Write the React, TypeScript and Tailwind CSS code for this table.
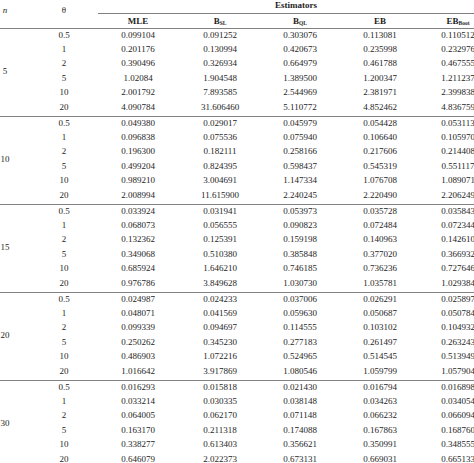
import React from "react";

type Block = { n: string; rows: [string, string, string, string, string, string][] };

const blocks: Block[] = [
  {
    n: "5",
    rows: [
      ["0.5", "0.099104", "0.091252", "0.303076", "0.113081", "0.110512"],
      ["1", "0.201176", "0.130994", "0.420673", "0.235998", "0.232976"],
      ["2", "0.390496", "0.326934", "0.664979", "0.461788", "0.467555"],
      ["5", "1.02084", "1.904548", "1.389500", "1.200347", "1.211237"],
      ["10", "2.001792", "7.893585", "2.544969", "2.381971", "2.399838"],
      ["20", "4.090784", "31.606460", "5.110772", "4.852462", "4.836759"],
    ],
  },
  {
    n: "10",
    rows: [
      ["0.5", "0.049380", "0.029017", "0.045979", "0.054428", "0.053113"],
      ["1", "0.096838", "0.075536", "0.075940", "0.106640", "0.105970"],
      ["2", "0.196300", "0.182111", "0.258166", "0.217606", "0.214408"],
      ["5", "0.499204", "0.824395", "0.598437", "0.545319", "0.551117"],
      ["10", "0.989210", "3.004691", "1.147334", "1.076708", "1.089071"],
      ["20", "2.008994", "11.615900", "2.240245", "2.220490", "2.206249"],
    ],
  },
  {
    n: "15",
    rows: [
      ["0.5", "0.033924", "0.031941", "0.053973", "0.035728", "0.035843"],
      ["1", "0.068073", "0.056555", "0.090823", "0.072484", "0.072344"],
      ["2", "0.132362", "0.125391", "0.159198", "0.140963", "0.142610"],
      ["5", "0.349068", "0.510380", "0.385848", "0.377020", "0.366932"],
      ["10", "0.685924", "1.646210", "0.746185", "0.736236", "0.727646"],
      ["20", "0.976786", "3.849628", "1.030730", "1.035781", "1.029384"],
    ],
  },
  {
    n: "20",
    rows: [
      ["0.5", "0.024987", "0.024233", "0.037006", "0.026291", "0.025897"],
      ["1", "0.048071", "0.041569", "0.059630", "0.050687", "0.050784"],
      ["2", "0.099339", "0.094697", "0.114555", "0.103102", "0.104932"],
      ["5", "0.250262", "0.345230", "0.277183", "0.261497", "0.263243"],
      ["10", "0.486903", "1.072216", "0.524965", "0.514545", "0.513949"],
      ["20", "1.016642", "3.917869", "1.080546", "1.059799", "1.057904"],
    ],
  },
  {
    n: "30",
    rows: [
      ["0.5", "0.016293", "0.015818", "0.021430", "0.016794", "0.016898"],
      ["1", "0.033214", "0.030335", "0.038148", "0.034263", "0.034054"],
      ["2", "0.064005", "0.062170", "0.071148", "0.066232", "0.066094"],
      ["5", "0.163170", "0.211318", "0.174088", "0.167863", "0.168760"],
      ["10", "0.338277", "0.613403", "0.356621", "0.350991", "0.348555"],
      ["20", "0.646079", "2.022373", "0.673131", "0.669031", "0.665133"],
    ],
  },
];

export default function App() {
  return (
    <div className="w-[474px] h-[463px] overflow-hidden bg-white text-[#1e1e1e] font-['Liberation_Serif',serif] text-[9px]">
      <div className="ml-[-20px] w-[494px] flex flex-col">
        {/* Header */}
        <div className="grid grid-cols-[50px_68px_80px_84px_76px_84px_72px] grid-rows-[13.5px_14px] border-b-[1.5px] border-[#808080]">
          <div className="row-span-2 flex justify-center pt-[4px] leading-[12px] italic">n</div>
          <div className="row-span-2 flex justify-center pt-[4px] leading-[12px]">θ</div>
          <div className="col-span-5 flex justify-center leading-[10px] font-bold border-b-[1.5px] border-[#808080]">
            Estimators
          </div>
          <div className="flex items-center justify-center font-bold leading-[12px]">MLE</div>
          <div className="flex items-center justify-center font-bold leading-[12px]">
            B<span className="text-[5.5px] translate-y-[2px]">SL</span>
          </div>
          <div className="flex items-center justify-center font-bold leading-[12px]">
            B<span className="text-[5.5px] translate-y-[2px]">QL</span>
          </div>
          <div className="flex items-center justify-center font-bold leading-[12px]">EB</div>
          <div className="flex items-center justify-center font-bold leading-[12px]">
            EB<span className="text-[5.5px] translate-y-[2px]">Boot</span>
          </div>
        </div>

        {/* Blocks */}
        {blocks.map((b) => (
          <div key={b.n} className="flex h-[88px] shrink-0 border-b-[1.5px] border-[#808080]">
            <div className="w-[50px] shrink-0 flex items-center justify-center pb-[3px] leading-[12px]">{b.n}</div>
            <div className="flex flex-col flex-1">
              {b.rows.map((r, i) => (
                <div
                  key={i}
                  className="grid grid-cols-[68px_80px_84px_76px_84px_72px] h-[14.42px] shrink-0"
                >
                  {r.map((c, j) => (
                    <div key={j} className="flex items-center justify-center pb-[3px] leading-[12px] whitespace-nowrap">
                      {c}
                    </div>
                  ))}
                </div>
              ))}
            </div>
          </div>
        ))}
      </div>
    </div>
  );
}
